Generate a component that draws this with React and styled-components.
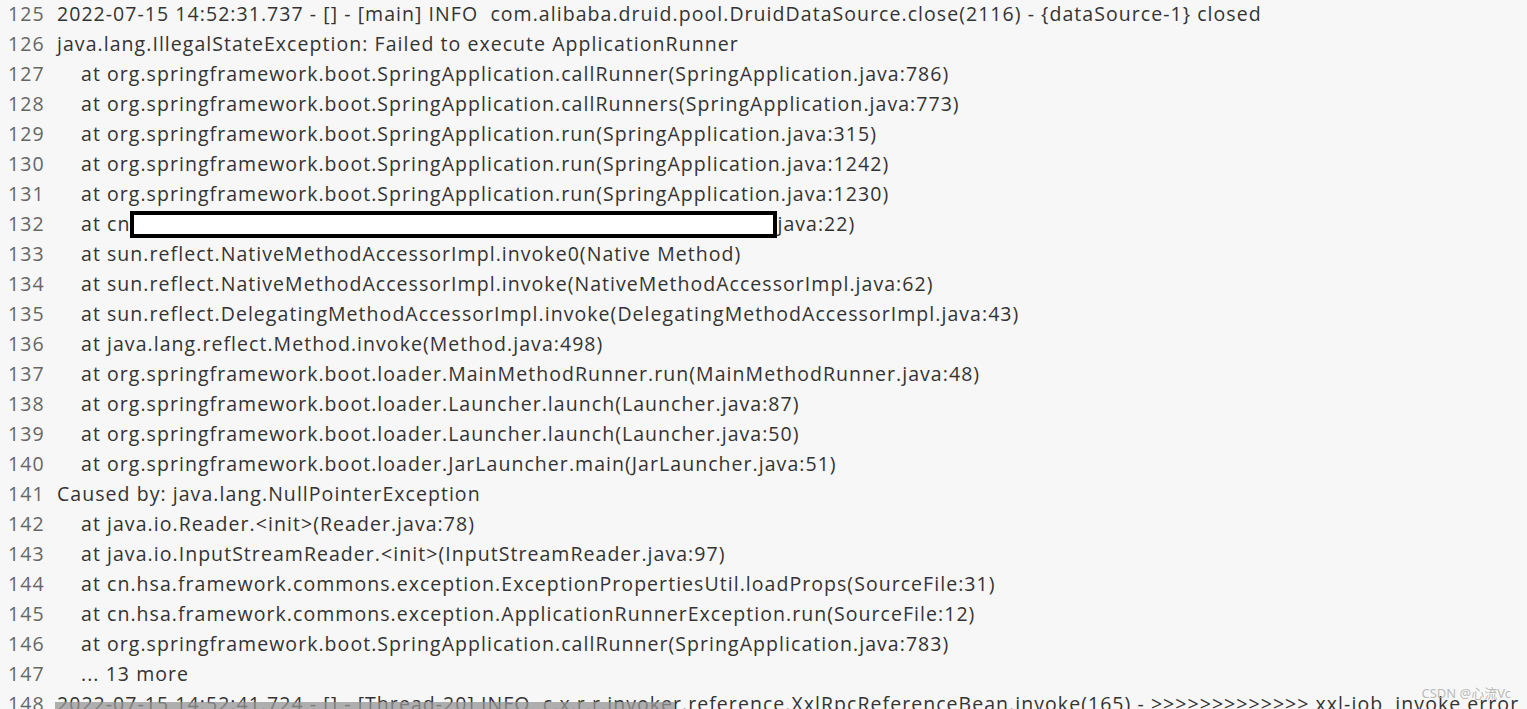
import React from "react";
import styled, { createGlobalStyle } from "styled-components";

const Global = createGlobalStyle`
  html, body { margin: 0; padding: 0; background: #f7f7f7; overflow: hidden; }
  #root { width: 1527px; height: 709px; }
`;

const Frame = styled.div`
  position: relative;
  width: 1527px;
  height: 709px;
  overflow: hidden;
  background: #f7f7f7;
  font-family: "Open Sans", "Noto Sans", "Noto Sans CJK SC", sans-serif;
  font-size: 19.5px;
  letter-spacing: 1.05px;
  color: #333;
`;

const Lines = styled.div`
  display: flex;
  flex-direction: column;
  margin-top: -1px;
  padding-left: 8px;
`;

const Row = styled.div`
  display: flex;
  height: 30px;
  line-height: 30px;
  white-space: pre;
`;

const Num = styled.span`
  width: 49px;
  flex: none;
  color: #666;
`;

const Code = styled.span`
  padding-left: ${(p) => (p.$indent ? "24px" : "0")};
`;

const Redact = styled.span`
  display: inline-block;
  box-sizing: border-box;
  width: 647px;
  height: 27px;
  border: 4px solid #000;
  background: #fff;
  vertical-align: -7px;
`;

const Thumb = styled.div`
  position: absolute;
  left: 55px;
  bottom: 0;
  width: 620px;
  height: 7px;
  background: rgba(150, 150, 150, 0.75);
`;

const Mark = styled.div`
  position: absolute;
  right: 16px;
  bottom: 7px;
  font-size: 13px;
  letter-spacing: 0;
  color: rgba(175, 175, 175, 0.85);
  font-family: "Noto Sans", "Noto Sans CJK SC", sans-serif;
`;

const lines = [
  [125, false, "2022-07-15 14:52:31.737 - [] - [main] INFO  com.alibaba.druid.pool.DruidDataSource.close(2116) - {dataSource-1} closed"],
  [126, false, "java.lang.IllegalStateException: Failed to execute ApplicationRunner"],
  [127, true, "at org.springframework.boot.SpringApplication.callRunner(SpringApplication.java:786)"],
  [128, true, "at org.springframework.boot.SpringApplication.callRunners(SpringApplication.java:773)"],
  [129, true, "at org.springframework.boot.SpringApplication.run(SpringApplication.java:315)"],
  [130, true, "at org.springframework.boot.SpringApplication.run(SpringApplication.java:1242)"],
  [131, true, "at org.springframework.boot.SpringApplication.run(SpringApplication.java:1230)"],
  [132, true, "REDACT"],
  [133, true, "at sun.reflect.NativeMethodAccessorImpl.invoke0(Native Method)"],
  [134, true, "at sun.reflect.NativeMethodAccessorImpl.invoke(NativeMethodAccessorImpl.java:62)"],
  [135, true, "at sun.reflect.DelegatingMethodAccessorImpl.invoke(DelegatingMethodAccessorImpl.java:43)"],
  [136, true, "at java.lang.reflect.Method.invoke(Method.java:498)"],
  [137, true, "at org.springframework.boot.loader.MainMethodRunner.run(MainMethodRunner.java:48)"],
  [138, true, "at org.springframework.boot.loader.Launcher.launch(Launcher.java:87)"],
  [139, true, "at org.springframework.boot.loader.Launcher.launch(Launcher.java:50)"],
  [140, true, "at org.springframework.boot.loader.JarLauncher.main(JarLauncher.java:51)"],
  [141, false, "Caused by: java.lang.NullPointerException"],
  [142, true, "at java.io.Reader.<init>(Reader.java:78)"],
  [143, true, "at java.io.InputStreamReader.<init>(InputStreamReader.java:97)"],
  [144, true, "at cn.hsa.framework.commons.exception.ExceptionPropertiesUtil.loadProps(SourceFile:31)"],
  [145, true, "at cn.hsa.framework.commons.exception.ApplicationRunnerException.run(SourceFile:12)"],
  [146, true, "at org.springframework.boot.SpringApplication.callRunner(SpringApplication.java:783)"],
  [147, true, "... 13 more"],
  [148, false, "2022-07-15 14:52:41.724 - [] - [Thread-20] INFO  c.x.r.r.invoker.reference.XxlRpcReferenceBean.invoke(165) - >>>>>>>>>>>>> xxl-job, invoke error"],
];

export default function App() {
  return (
    <Frame>
      <Global />
      <Lines>
        {lines.map(([n, indent, text]) => (
          <Row key={n}>
            <Num>{n}</Num>
            <Code $indent={indent}>
              {text === "REDACT" ? (
                <>
                  at cn<Redact />java:22)
                </>
              ) : (
                text
              )}
            </Code>
          </Row>
        ))}
      </Lines>
      <Thumb />
      <Mark>CSDN @心流Vc</Mark>
    </Frame>
  );
}
